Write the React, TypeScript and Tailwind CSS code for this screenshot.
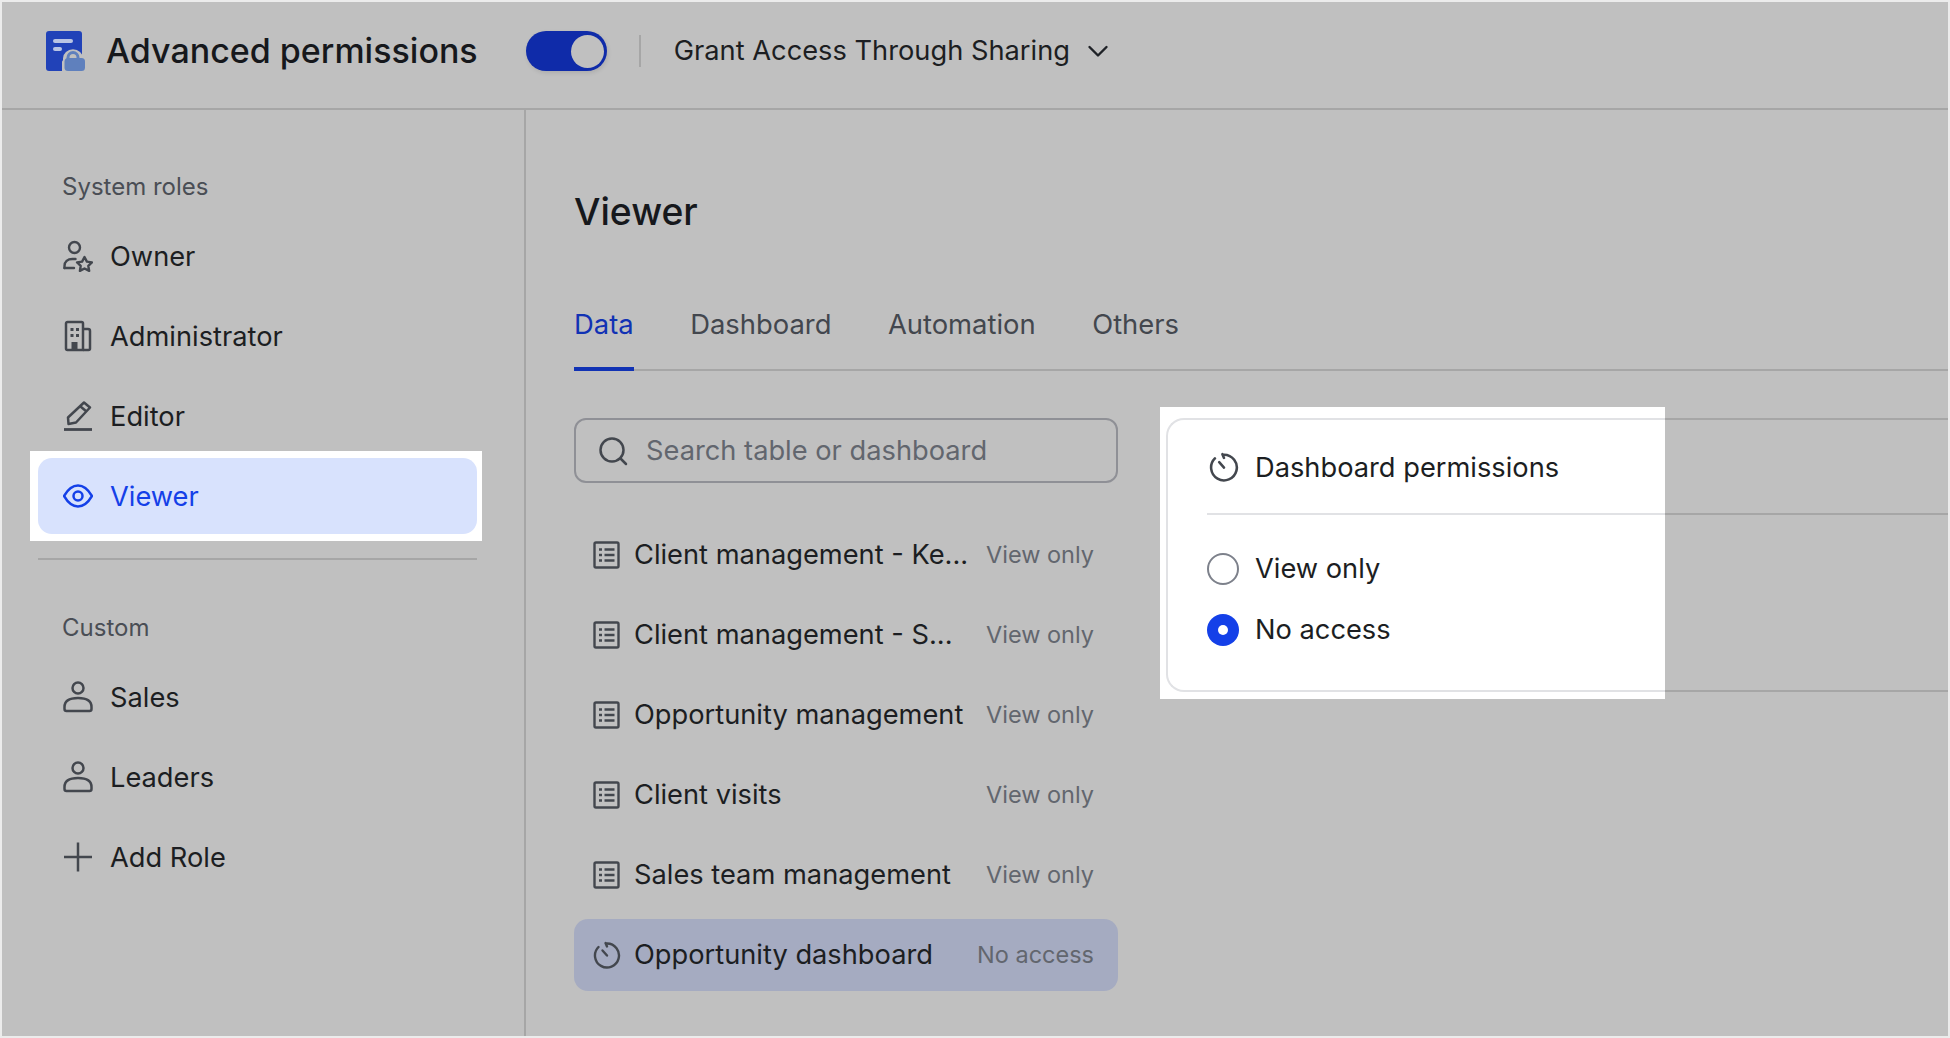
import type { ReactNode } from "react";

function Logo() {
  return (
    <svg width="40" height="40" viewBox="0 0 40 40" className="shrink-0">
      <rect x="0" y="0" width="36" height="40" rx="3" fill="#2142b8" />
      <rect x="7" y="8" width="20" height="4" rx="2" fill="#b9c4e4" />
      <rect x="7" y="16" width="9" height="4" rx="2" fill="#b9c4e4" />
      <path d="M16 40v-9a2 2 0 0 1 1-1.700v-2a10 9 0 0 1 20 0v2a2 2 0 0 1 1 1.700v9z" fill="#c0c0c0" />
      <path d="M22 29v-2.500a5 5 0 0 1 10 0V29" fill="none" stroke="#5f80bd" strokeWidth="3" />
      <rect x="18.500" y="27" width="20.500" height="13" rx="3.500" fill="#5f80bd" />
    </svg>
  );
}

function OwnerIcon() {
  return (
    <svg width="30" height="32" viewBox="0 0 30 32" fill="none" stroke="#43474e" strokeWidth="2.400" strokeLinecap="round" strokeLinejoin="round" className="shrink-0">
      <circle cx="11.500" cy="7.500" r="5.500" />
      <path d="M1.500 28v-2c0-4 3-7 8-7h3" />
      <path d="M1.500 28h9.500" />
      <path d="M21.500 17l2.400 4.600 5 .8-3.600 3.500.9 5-4.700-2.400-4.600 2.400.8-5-3.600-3.500 5-.8z" />
    </svg>
  );
}

function AdminIcon() {
  return (
    <svg width="30" height="32" viewBox="0 0 30 32" fill="none" stroke="#43474e" strokeWidth="2.500" strokeLinejoin="round" className="shrink-0">
      <path d="M3 3.500a1.500 1.500 0 0 1 1.500-1.500h14a1.500 1.500 0 0 1 1.500 1.500V30H4.500A1.500 1.500 0 0 1 3 28.500z" />
      <path d="M20 9h5a2 2 0 0 1 2 2v17.500a1.500 1.500 0 0 1-1.500 1.500H20" />
      <g fill="#43474e" stroke="none">
        <rect x="7.500" y="8" width="3" height="3" />
        <rect x="13" y="8" width="3" height="3" />
        <rect x="7.500" y="14" width="3" height="3" />
        <rect x="13" y="14" width="3" height="3" />
        <rect x="8.500" y="22" width="6" height="8" />
      </g>
    </svg>
  );
}

function EditorIcon() {
  return (
    <svg width="30" height="32" viewBox="0 0 30 32" fill="none" stroke="#43474e" strokeWidth="2.500" strokeLinejoin="round" className="shrink-0">
      <path d="M21 2.500l6 5-14 15-7.500 1.500L5 17.500z" />
      <path d="M17.500 6.500l6 5" />
      <path d="M1 29.500h28" strokeWidth="2.800" />
    </svg>
  );
}

function EyeIcon() {
  return (
    <svg width="30" height="32" viewBox="0 0 30 32" fill="none" stroke="#1440e8" strokeWidth="2.500" strokeLinejoin="round" className="shrink-0">
      <path d="M1 16c3.500-6 8-10.500 14-10.500S25.500 10 29 16c-3.500 6-8 10.500-14 10.500S4.500 22 1 16z" />
      <circle cx="15" cy="16" r="4.500" />
    </svg>
  );
}

function PersonIcon() {
  return (
    <svg width="30" height="32" viewBox="0 0 30 32" fill="none" stroke="#43474e" strokeWidth="2.500" strokeLinejoin="round" className="shrink-0">
      <circle cx="15" cy="7" r="5.500" />
      <path d="M1.500 26c0-6 5-9 13.500-9s13.500 3 13.500 9v2a2 2 0 0 1-2 2h-23a2 2 0 0 1-2-2z" />
    </svg>
  );
}

function PlusIcon() {
  return (
    <svg width="30" height="32" viewBox="0 0 30 32" fill="none" stroke="#43474e" strokeWidth="2.500" className="shrink-0">
      <path d="M15 1.500v29M1 16h28" />
    </svg>
  );
}

function TableIcon() {
  return (
    <svg width="27" height="28" viewBox="0 0 27 28" fill="none" stroke="#43474e" strokeWidth="2.400" strokeLinejoin="round" className="shrink-0">
      <rect x="1.500" y="1.500" width="24" height="25" rx="1.500" />
      <path d="M6 8.500h3M11.500 8.500h10M6 14h3M11.500 14h10M6 19.500h3M11.500 19.500h10" strokeWidth="2.600" />
    </svg>
  );
}

function GaugeIcon({ size }: { size: number }) {
  return (
    <svg width={size} height={size} viewBox="0 0 28 28" fill="none" stroke="#43474e" strokeWidth="2.400" strokeLinecap="round" className="shrink-0">
      <path d="M14 2.500a12 12 0 1 1-8.500 3.500" />
      <path d="M9.500 9.500l4.500 5" />
      <path d="M12.500 2l1.500 3.500" />
    </svg>
  );
}

function SearchIcon() {
  return (
    <svg width="30" height="30" viewBox="0 0 30 30" fill="none" stroke="#43474e" strokeWidth="2.500" strokeLinecap="round" className="shrink-0">
      <circle cx="14" cy="14" r="11.500" />
      <path d="M22.500 22.500l5.500 5.500" />
    </svg>
  );
}

function Chevron() {
  return (
    <svg width="22" height="22" viewBox="0 0 22 22" fill="none" stroke="#1f2227" strokeWidth="2.400" strokeLinecap="round" strokeLinejoin="round">
      <path d="M2.500 7l8.500 8.500L19.500 7" />
    </svg>
  );
}

function SideItem({ icon, label }: { icon: ReactNode; label: string }) {
  return (
    <div className="flex h-[80px] items-center gap-[17px] pl-[25px] text-[#1c1e22]">
      {icon}
      <span className="pt-[2px]">{label}</span>
    </div>
  );
}

function Row({ icon, label, value, active }: { icon: ReactNode; label: string; value: string; active?: boolean }) {
  return (
    <div className={active ? "mt-[4px] flex h-[72px] items-center rounded-[14px] bg-[#a5abc1]" : "flex h-[80px] items-center"}>
      <span className="ml-[19px] flex w-[41px] shrink-0">{icon}</span>
      <span className="flex-1 whitespace-nowrap text-[#1c1e22]">{label}</span>
      <span className="mr-[24px] whitespace-nowrap text-[23.500px] text-[#62666e]">{value}</span>
    </div>
  );
}

export default function App() {
  return (
    <div className="flex h-[1038px] w-[1950px] flex-col overflow-hidden border-2 border-[#ececec] bg-[#c0c0c0] text-[27.250px] font-['Inter',sans-serif]">
      <header className="flex h-[108px] shrink-0 items-center border-b-2 border-[#a6a6a6] pb-[8px]">
        <div className="ml-[44px]"><Logo /></div>
        <h1 className="ml-[20px] -mt-[2px] text-[34px] font-medium text-[#16181c]">Advanced permissions</h1>
        <div className="ml-[48px] flex h-[40px] w-[81px] items-center justify-end rounded-full bg-[#0f2ba9] pr-[3px] shadow-[1px_2px_4px_rgba(0,0,0,0.1)]">
          <div className="h-[33px] w-[33px] rounded-full bg-[#c0c0c0]" />
        </div>
        <div className="ml-[32px] h-[32px] w-[2px] bg-[#a6a6a6]" />
        <span className="ml-[33px] text-[#1c1e22]">Grant Access Through Sharing</span>
        <span className="ml-[17px] flex"><Chevron /></span>
      </header>
      <div className="flex min-h-0 flex-1">
        <aside className="w-[524px] shrink-0 border-r-2 border-[#a6a6a6] pl-[36px] pr-[47px] pt-[54px]">
          <div className="pb-[6px] pl-[24px] text-[24px] leading-[46px] text-[#4a4e55]">System roles</div>
          <SideItem icon={<OwnerIcon />} label="Owner" />
          <SideItem icon={<AdminIcon />} label="Administrator" />
          <SideItem icon={<EditorIcon />} label="Editor" />
          <div className="-my-[5px] -ml-[8px] -mr-[5px] bg-white py-[7px] pl-[8px] pr-[5px]">
            <div className="flex h-[76px] items-center gap-[17px] rounded-[14px] bg-[#d8e2fd] pl-[25px] text-[#1440e8]">
              <EyeIcon />
              <span className="pt-[2px]">Viewer</span>
            </div>
          </div>
          <div className="mt-[22px] h-[2px] bg-[#a6a6a6]" />
          <div className="pb-[6px] pl-[24px] pt-[45px] text-[24px] leading-[46px] text-[#4a4e55]">Custom</div>
          <SideItem icon={<PersonIcon />} label="Sales" />
          <SideItem icon={<PersonIcon />} label="Leaders" />
          <SideItem icon={<PlusIcon />} label="Add Role" />
        </aside>
        <main className="min-w-0 flex-1 pl-[48px] pt-[74px]">
          <h2 className="text-[37.300px] font-medium leading-[56px] text-[#16181c]">Viewer</h2>
          <div className="mt-[57px] flex h-[74px] gap-[56.500px] border-b-2 border-[#a6a6a6] text-[27.400px] text-[#43474e]">
            <div className="-mb-[2px] h-[74px] border-b-4 border-[#1132b4] pt-[7px] text-[#1132b4]">Data</div>
            <div className="pt-[7px]">Dashboard</div>
            <div className="pt-[7px]">Automation</div>
            <div className="pt-[7px]">Others</div>
          </div>
          <div className="flex">
            <div className="w-[544px] shrink-0 pt-[47px]">
              <div className="flex h-[65px] items-center gap-[18px] rounded-[12px] border-2 border-[#8f9096] pl-[22px] text-[#62666e]">
                <SearchIcon />
                <span className="pt-[1px]">Search table or dashboard</span>
              </div>
              <div className="mt-[32px]">
                <Row icon={<TableIcon />} label="Client management - Ke..." value="View only" />
                <Row icon={<TableIcon />} label="Client management - S..." value="View only" />
                <Row icon={<TableIcon />} label="Opportunity management" value="View only" />
                <Row icon={<TableIcon />} label="Client visits" value="View only" />
                <Row icon={<TableIcon />} label="Sales team management" value="View only" />
                <Row icon={<GaugeIcon size={28} />} label="Opportunity dashboard" value="No access" active />
              </div>
            </div>
            <div className="ml-[42px] mt-[36px] flex h-[292px] flex-1">
              <div className="w-[505px] shrink-0 bg-white pb-[7px] pl-[6px] pt-[11px] text-[#1c1e22]">
                <div className="h-full rounded-l-[18px] border-y-2 border-l-2 border-[#e1e2e5]">
                  <div className="ml-[39px] flex h-[95px] items-center gap-[16px] border-b-2 border-[#e1e2e5] pl-[2px]">
                    <GaugeIcon size={30} />
                    <span className="pt-[4px]">Dashboard permissions</span>
                  </div>
                  <div className="ml-[39px] mt-[24px] flex h-[61px] items-center gap-[16px]">
                    <div className="-mt-[1px] h-[32px] w-[32px] rounded-full border-2 border-[#7d818b]" />
                    <span>View only</span>
                  </div>
                  <div className="ml-[39px] flex h-[61px] items-center gap-[16px]">
                    <div className="-mt-[1px] flex h-[32px] w-[32px] items-center justify-center rounded-full bg-[#1440e8]">
                      <div className="h-[10px] w-[10px] rounded-full bg-white" />
                    </div>
                    <span>No access</span>
                  </div>
                </div>
              </div>
              <div className="flex-1 pb-[7px] pt-[11px]">
                <div className="h-full border-y-2 border-[#a6a6a6]">
                  <div className="h-[95px] border-b-2 border-[#a6a6a6]" />
                </div>
              </div>
            </div>
          </div>
        </main>
      </div>
    </div>
  );
}
